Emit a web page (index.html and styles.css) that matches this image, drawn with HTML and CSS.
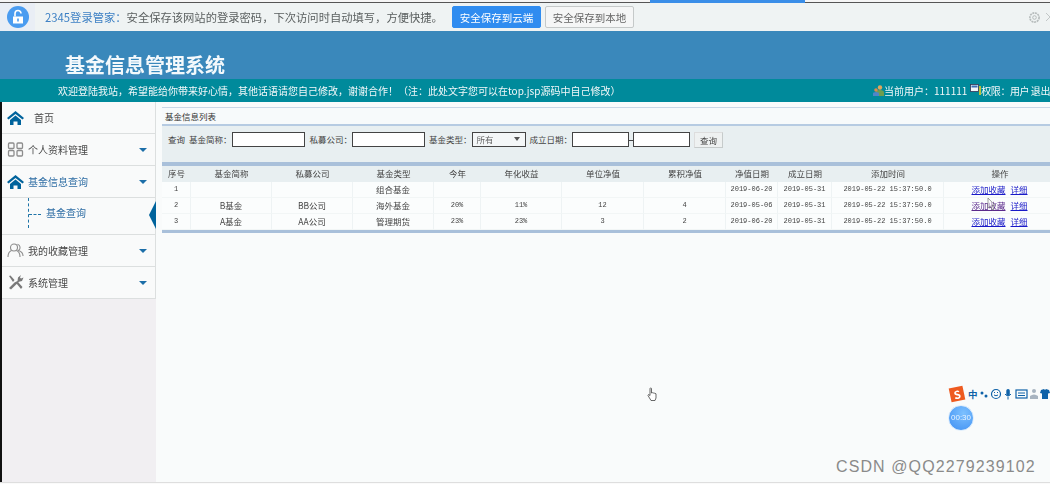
FILE: index.html
```html
<!DOCTYPE html>
<html lang="zh">
<head>
<meta charset="utf-8">
<title>基金信息管理系统</title>
<link rel="stylesheet" href="styles.css">
</head>
<body>
<div class="progress"><span class="progress-fill"></span></div>
<div class="pwbar">
  <div class="lockcell">
    <svg width="22" height="22" viewBox="0 0 22 22"><circle cx="11" cy="11" r="11" fill="#4a9cf0"/><path d="M6 10.500h10v7H6z" fill="#fff"/><path d="M8 10.500V7.500a3 3 0 0 1 6 0" fill="none" stroke="#fff" stroke-width="1.600"/><rect x="10.200" y="12.500" width="1.600" height="3" fill="#4a9cf0"/></svg>
  </div>
  <p class="pwtext"><span class="brand">2345登录管家：</span>安全保存该网站的登录密码，下次访问时自动填写，方便快捷。</p>
  <button class="pwbtn primary">安全保存到云端</button>
  <button class="pwbtn">安全保存到本地</button>
  <svg class="gear" width="13" height="13" viewBox="0 0 13 13"><circle cx="6.500" cy="6.500" r="4.600" fill="none" stroke="#b5bbbb" stroke-width="1.600" stroke-dasharray="2 .7"/><circle cx="6.500" cy="6.500" r="1.800" fill="none" stroke="#b5bbbb"/></svg>
  <svg class="close" width="10" height="10" viewBox="0 0 10 10"><path d="M1 1l8 8M9 1L1 9" stroke="#c2c7c7"/></svg>
</div>
<header class="banner"><h1>基金信息管理系统</h1></header>
<div class="notice">
  <p class="welcome">欢迎登陆我站，希望能给你带来好心情，其他话语请您自己修改，谢谢合作！（注：此处文字您可以在top.jsp源码中自己修改）</p>
  <div class="userinfo">
    <svg class="infoicon" width="11" height="11" viewBox="0 0 11 11"><circle cx="7" cy="2.500" r="2.200" fill="#e2a65a"/><path d="M3 11V7.500Q3 5 7 5t4 2.500V11z" fill="#6f9d4f"/><circle cx="3" cy="5" r="1.800" fill="#d98c4c"/><path d="M0 11V8.500Q0 7 3 7t3 1.500V11z" fill="#4f86c9"/></svg>
    <span>当前用户：111111</span>
    <svg class="infoicon permicon" width="11" height="11" viewBox="0 0 11 11"><rect x=".5" y=".5" width="8" height="7" fill="#f2f6fa" stroke="#335" stroke-width=".8"/><rect x="1.500" y="1.500" width="6" height="2" fill="#3a6fb5"/><rect x="9" y="2" width="2" height="9" fill="#b8c23a"/></svg>
    <span class="role">权限：用户 退出</span>
  </div>
</div>
<div class="app">
  <nav class="sidebar">
    <a class="navitem">
      <svg class="navicon" width="17" height="14" viewBox="0 0 17 14"><path d="M8.500 0L0 7l1.500 1.500 7-5.500 7 5.500L17 7z" fill="#00639c"/><path d="M3 9l5.500-4.500L14 9v5h-3.500v-3.500h-4V14H3z" fill="#00639c"/></svg>
      <span class="navlabel home">首页</span>
    </a>
    <a class="navitem">
      <svg class="navicon" width="16" height="15" viewBox="0 0 16 15"><g fill="none" stroke="#8d8d8d" stroke-width="1.300"><rect x="1" y="1" width="5.500" height="5.500" rx="1"/><rect x="9.500" y="1" width="5.500" height="5.500" rx="1"/><rect x="1" y="8.500" width="5.500" height="5.500" rx="1"/><rect x="9.500" y="8.500" width="5.500" height="5.500" rx="1"/></g></svg>
      <span class="navlabel">个人资料管理</span><i class="caret"></i>
    </a>
    <a class="navitem active">
      <svg class="navicon" width="17" height="14" viewBox="0 0 17 14"><path d="M8.500 0L0 7l1.500 1.500 7-5.500 7 5.500L17 7z" fill="#00639c"/><path d="M3 9l5.500-4.500L14 9v5h-3.500v-3.500h-4V14H3z" fill="#00639c"/></svg>
      <span class="navlabel">基金信息查询</span><i class="caret"></i>
    </a>
    <div class="subnav">
      <span class="tree"></span>
      <span class="sublabel">基金查询</span>
      <i class="pointer"></i>
    </div>
    <a class="navitem">
      <svg class="navicon" width="17" height="15" viewBox="0 0 17 15"><g fill="none" stroke="#8d8d8d" stroke-width="1.100"><circle cx="7" cy="4.500" r="3.500"/><path d="M1 14q0-5 3.500-6.500M9.500 7.500Q13 9 13 14"/><path d="M10.500 1.200a3.500 3.500 0 0 1 1 6.300Q16 9 16 13"/></g></svg>
      <span class="navlabel">我的收藏管理</span><i class="caret"></i>
    </a>
    <a class="navitem">
      <svg class="navicon" width="16" height="15" viewBox="0 0 16 15"><path d="M1.500 1L3 .5l4 4.500-1.500 2zM10 6l.5-3.500L13.500 0l-1 2.500 1 1 2.500-1-1.500 3.500-3 .8-8 7.700-2-1.500 5.500-5.500zM9 8.500l1.500-1.500 4.500 5-1.500 2z" fill="#7a7a7a"/></svg>
      <span class="navlabel">系统管理</span><i class="caret"></i>
    </a>
  </nav>
  <main class="content">
    <section class="panel">
      <h2 class="paneltitle">基金信息列表</h2>
      <form class="search">
        <label class="lead">查询</label>
        <label>基金简称：</label><input class="field" type="text">
        <label>私募公司：</label><input class="field" type="text">
        <label>基金类型：</label>
        <span class="selectbox">所有<i class="selectarrow"></i></span>
        <label>成立日期：</label>
        <span class="dates"><input class="field date" type="text"><i class="dash"></i><input class="field date" type="text"></span>
        <button class="query" type="button">查询</button>
      </form>
      <table class="grid">
        <colgroup>
          <col class="c1"><col class="c2"><col class="c2"><col class="c2"><col class="c3"><col class="c2"><col class="c4"><col class="c4"><col class="c5"><col class="c6"><col class="c7"><col class="c8">
        </colgroup>
        <thead>
          <tr><th>序号</th><th>基金简称</th><th>私募公司</th><th>基金类型</th><th>今年</th><th>年化收益</th><th>单位净值</th><th>累积净值</th><th>净值日期</th><th>成立日期</th><th>添加时间</th><th>操作</th></tr>
        </thead>
        <tbody>
          <tr><td class="n">1</td><td></td><td></td><td>组合基金</td><td></td><td></td><td></td><td></td><td class="n">2019-06-20</td><td class="n">2019-05-31</td><td class="n">2019-05-22 15:37:50.0</td><td><a class="link" href="#a">添加收藏</a><a class="link detail" href="#b">详细</a></td></tr>
          <tr><td class="n">2</td><td>B基金</td><td>BB公司</td><td>海外基金</td><td class="n">20%</td><td class="n">11%</td><td class="n">12</td><td class="n">4</td><td class="n">2019-05-06</td><td class="n">2019-05-31</td><td class="n">2019-05-22 15:37:50.0</td><td><a class="link visited" href="#a">添加收藏</a><a class="link detail" href="#b">详细</a></td></tr>
          <tr><td class="n">3</td><td>A基金</td><td>AA公司</td><td>管理期货</td><td class="n">23%</td><td class="n">23%</td><td class="n">3</td><td class="n">2</td><td class="n">2019-06-20</td><td class="n">2019-05-31</td><td class="n">2019-05-22 15:37:50.0</td><td><a class="link" href="#a">添加收藏</a><a class="link detail" href="#b">详细</a></td></tr>
        </tbody>
      </table>
    </section>
  </main>
</div>
<div class="footline"></div>
<svg class="arrowcursor" width="9" height="14" viewBox="0 0 9 14"><path d="M1 1v10l2.500-2 2 4 1.500-.7-2-4H8z" fill="#fff" fill-opacity=".5" stroke="#777" stroke-width=".7"/></svg>
<svg class="handcursor" width="11" height="14" viewBox="0 0 11 14"><path d="M3 1.500a.8.8 0 0 1 1.500 0V6l1-.3 1 .3 1 .2 1.500.6V11l-1 2.500H4L1 8.500l.5-1 1.500 1z" fill="#fff" stroke="#444" stroke-width=".8"/></svg>
<div class="imebar">
  <span class="imelogo">S</span>
  <span class="imezh">中</span>
  <svg class="imeicons" width="72" height="12" viewBox="0 0 72 12"><g fill="#0f62a8"><circle cx="3" cy="5" r="1.500"/><circle cx="7" cy="8" r="1.500"/></g><circle cx="17" cy="6" r="4.500" fill="none" stroke="#0f62a8" stroke-width="1.200"/><path d="M15 7q2 1.500 4 0M15 4.500h1M18 4.500h1" fill="none" stroke="#0f62a8"/><rect x="27.300" y="1" width="3.500" height="7" rx="1.700" fill="#0f62a8"/><path d="M26 6q3 4 6 0M29 9v2.500" stroke="#0f62a8" fill="none"/><rect x="37" y="2" width="11" height="8" fill="none" stroke="#0f62a8" stroke-width="1.200"/><path d="M39 5h7M39 7.500h7" stroke="#0f62a8"/><circle cx="55" cy="3" r="2" fill="#a8b4c0"/><path d="M51 11V8q4-3 8 0v3z" fill="#a8b4c0"/><path d="M62 2l3-1 1 1 1-1 3 1 1 3-2 .5V11h-6V5.500L61 5z" fill="#0f62a8"/></svg>
</div>
<div class="timer">00:30</div>
<div class="watermark">CSDN @QQ2279239102</div>
</body>
</html>
```
FILE: styles.css
```css
* { box-sizing: border-box; }
html, body { margin: 0; height: 100%; }
body {
  width: 1050px;
  height: 484px;
  overflow: hidden;
  position: relative;
  display: flex;
  flex-direction: column;
  font-family: "Noto Sans CJK SC", "Liberation Sans", sans-serif;
  background: #f9fbfb;
  color: #333;
}
.progress { height: 3px; flex: none; background: #f5f5f5; border-bottom: 1px solid #555; position: relative; }
.progress-fill { display: block; position: absolute; left: 650px; top: 0; width: 155px; height: 3px; background: #3a8ee8; }

.pwbar { height: 28px; flex: none; display: flex; align-items: center; background: #eff3f3; filter: blur(.3px); }
.lockcell { width: 35px; height: 100%; display: flex; align-items: center; justify-content: center; background: #e9eef5; }
.pwtext { margin: 0 0 0 10px; width: 407px; font-size: 11.300px; line-height: 28px; color: #5a5f5f; white-space: nowrap; }
.brand { color: #3d80c4; }
.pwbtn { width: 89px; height: 22px; margin-right: 4px; padding: 0; font: inherit; font-size: 10.500px; color: #666; background: #f5f6f6; border: 1px solid #c5c9c9; border-radius: 2px; }
.pwbtn.primary { color: #fff; background: #2f8cf0; border-color: #2f8cf0; }
.gear { margin-left: auto; }
.close { margin: 0 -5px 0 4px; }

.banner { height: 48px; flex: none; background: #3a88bb; padding: 19px 0 0 65px; filter: blur(.3px); }
.banner h1 { margin: 0; font-size: 20px; line-height: 29px; font-weight: 700; color: #f4f9fc; }

.notice { height: 23px; flex: none; display: flex; align-items: center; justify-content: space-between; background: #008a9b; color: #f2f8f9; font-size: 10px; padding-left: 58px; white-space: nowrap; filter: blur(.3px); overflow: hidden; }
.welcome { margin: 0; }
.userinfo { display: flex; align-items: center; width: 177px; flex: none; font-size: 10px; }
.infoicon { flex: none; }
.permicon { margin-left: 3px; margin-top: -3px; }
.role { letter-spacing: -.45px; }

.app { flex: 1; display: flex; min-height: 0; border-left: 2px solid #111; }
.sidebar { width: 154px; flex: none; background: #f1eff2; display: block; height: 100%; }
.navitem { height: 32px; display: flex; align-items: center; padding-left: 5px; background: #f9fafa; border-bottom: 1px solid #dcdfdf; border-right: 1px solid #dcdfdf; font-size: 10px; color: #484848; }
.navicon { flex: none; width: 17px; }
.navlabel { margin-left: 4px; flex: 1; filter: blur(.3px); }
.navlabel.home { margin-left: 10px; }
.navitem.active { color: #2e6da4; }
.caret { width: 0; height: 0; margin-right: 8px; border: 4px solid transparent; border-top-color: #1c6ea8; border-bottom: 0; }
.subnav { height: 37px; display: flex; align-items: flex-start; position: relative; padding-left: 26px; background: #f9fafa; border-bottom: 1px solid #dcdfdf; border-right: 1px solid #dcdfdf; }
.tree { width: 13px; height: 30px; flex: none; position: relative; border-left: 1px dashed #1f74a8; }
.tree::after { content: ""; position: absolute; left: 0; right: 0; top: 16px; border-top: 1px dashed #1f74a8; }
.sublabel { margin: 8px 0 0 5px; font-size: 10px; line-height: 14px; color: #2e6da4; filter: blur(.3px); }
.pointer { position: absolute; right: -1px; top: 3px; width: 0; height: 0; border: 14px solid transparent; border-left: 0; border-right: 7px solid #00639c; }

.content { flex: 1; min-width: 0; padding: 5px 0 0 6px; overflow: hidden; }
.panel { width: 894px; border-top: 1px solid #c9d7e6; filter: blur(.3px); }
.paneltitle { margin: 0; height: 18px; font-size: 8.500px; font-weight: 400; line-height: 16px; padding-left: 3px; background: #f7fafb; border-bottom: 2px solid #b6cbe2; color: #333; }
.search { height: 36px; display: flex; align-items: flex-start; padding: 7px 0 0 6px; background: #e8eff1; font-size: 8.500px; color: #444; }
.search label { line-height: 14px; margin-top: -1px; white-space: nowrap; }
.search label.lead { margin-right: 4px; }
.field { width: 73px; height: 15px; margin: -1px 5px 0 0; padding: 0; background: #fff; border: 1px solid #444; border-radius: 0; flex: none; }
.search .field + label + .field { margin-right: 4px; }
.selectbox { width: 54px; height: 15px; margin: -1px 4px 0 0; flex: none; padding-left: 4px; line-height: 12px; background: #f4f7f8; border: 1px solid #444; color: #666; position: relative; }
.selectarrow { position: absolute; right: 5px; top: 4px; border: 3px solid transparent; border-top: 4px solid #555; border-bottom: 0; }
.dates { display: flex; align-items: center; margin-right: 4px; flex: none; }
.field.date { width: 57px; margin: -1px 0 0; }
.dash { width: 4px; height: 1px; background: #444; }
.query { width: 29px; height: 16px; padding: 0; margin-top: -1px; flex: none; font: inherit; color: #444; background: #eef1f1; border: 1px solid #c6cbcb; border-top-color: #ddd; border-left-color: #ddd; }

.grid { width: 894px; table-layout: fixed; border-collapse: separate; border-spacing: 0; border-top: 4px solid #a9c0da; border-bottom: 3px solid #a9c0da; }
.c1 { width: 29px; }
.c2 { width: 81px; }
.c3 { width: 47px; }
.c4 { width: 82px; }
.c5 { width: 52px; }
.c6 { width: 54px; }
.c7 { width: 112px; }
.c8 { width: 112px; }
.grid th { height: 16px; padding: 0 0 2px; font-size: 8.500px; line-height: 12px; font-weight: 400; background: #e8eff1; color: #444; white-space: nowrap; }
.grid td { height: 16px; padding: 0 0 2px; font-size: 8.500px; line-height: 12px; text-align: center; color: #444; border-right: 1px solid #eef3f4; border-bottom: 1px solid #f2f6f6; background: #fbfdfd; white-space: nowrap; }
.grid td.n { font-family: "Liberation Mono", "Noto Sans CJK SC", monospace; font-size: 7px; }
.link { color: #1a1ac8; text-decoration: underline; }
.link.visited { color: #5b2a8c; }
.link.detail { margin-left: 5px; }

.footline { height: 2px; flex: none; background: #fafafa; border-top: 1px solid #dedede; }

.arrowcursor { position: absolute; left: 987px; top: 197px; }
.handcursor { position: absolute; left: 647px; top: 387px; }
.imebar { position: absolute; left: 950px; top: 386px; width: 100px; height: 15px; display: flex; align-items: center; gap: 3px; }
.imelogo { width: 14px; height: 14px; flex: none; background: #ee5a1f; color: #fff; font-size: 11px; font-weight: 700; line-height: 14px; text-align: center; transform: rotate(-12deg); }
.imezh { width: 10px; flex: none; margin-left: 1px; font-size: 9.500px; color: #0f62a8; font-weight: 700; }
.imeicons { flex: none; margin-left: -2px; }
.timer { position: absolute; left: 948px; top: 405px; width: 26px; height: 26px; border-radius: 50%; background: radial-gradient(circle at 60% 30%, #7cc0ff, #3f8ff2); border: 1px solid #dfeefc; color: #e8f3ff; font-size: 8px; line-height: 24px; text-align: center; font-family: "Liberation Sans", sans-serif; }
.watermark { position: absolute; left: 836px; top: 457px; font-family: "Liberation Sans", sans-serif; font-size: 16px; line-height: 20px; letter-spacing: 1.100px; color: #8a8a8a; white-space: nowrap; }
```
